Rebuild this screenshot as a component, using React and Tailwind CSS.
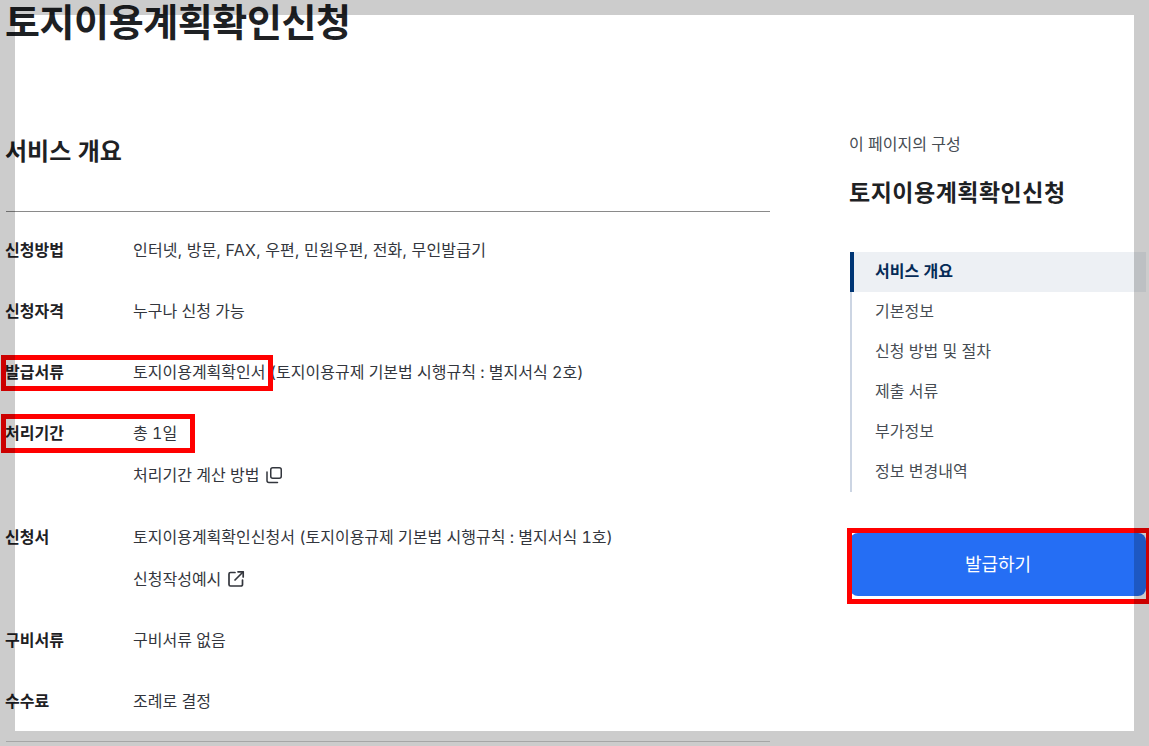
import React from "react";

const font = "font-['Inter','Noto_Sans_CJK_KR',sans-serif]";

const rows = [
  { label: "신청방법", lines: ["인터넷, 방문, FAX, 우편, 민원우편, 전화, 무인발급기"], wide: true },
  { label: "신청자격", lines: ["누구나 신청 가능"] },
  { label: "발급서류", lines: ["토지이용계획확인서 (토지이용규제 기본법 시행규칙 : 별지서식 2호)"] },
  { label: "처리기간", lines: ["총 1일", "처리기간 계산 방법"], icon: "copy" },
  { label: "신청서", lines: ["토지이용계획확인신청서 (토지이용규제 기본법 시행규칙 : 별지서식 1호)", "신청작성예시"], icon: "link" },
  { label: "구비서류", lines: ["구비서류 없음"] },
  { label: "수수료", lines: ["조례로 결정"] },
];

const nav = ["서비스 개요", "기본정보", "신청 방법 및 절차", "제출 서류", "부가정보", "정보 변경내역"];

const CopyIcon = () => (
  <svg width="18" height="18" viewBox="0 0 18 18" fill="none" stroke="#33363d" strokeWidth="1.5" strokeLinecap="round">
    <rect x="5.75" y="1.75" width="10.5" height="10.5" rx="2" />
    <path d="M2 6v8.5A2 2 0 0 0 4 16.5h8.5" />
  </svg>
);

const LinkIcon = () => (
  <svg width="18" height="18" viewBox="0 0 18 18" fill="none" stroke="#33363d" strokeWidth="1.7" strokeLinecap="round" strokeLinejoin="round">
    <path d="M8 2.5H3.5a1.5 1.5 0 0 0-1.5 1.5v10.5a1.5 1.5 0 0 0 1.5 1.5H14a1.5 1.5 0 0 0 1.5-1.5V10" />
    <path d="M11 1.8h5.2V7" />
    <path d="M16 2 8 10" />
  </svg>
);

const App = () => {
  return (
    <div className={`relative h-[746px] w-[1149px] overflow-hidden bg-white tabular-nums ${font}`}>
      <div className="flex">
        {/* main column */}
        <div className="ml-[6px] w-[764px]">
          <h1 className="-ml-px h-[44px] text-[38px] leading-[44px] font-bold tracking-[-0.4px] text-[#1e2124]">토지이용계획확인신청</h1>
          <h2 className="-ml-px mt-[91px] h-[34px] text-[24px] leading-[34px] font-bold text-[#1e2124]">서비스 개요</h2>
          <div className="mt-[42px] border-t border-[#8a8a8a]" />
          <div className="-ml-px mt-[26px] flex flex-col gap-[37px]">
            {rows.map((r) => (
              <div key={r.label} className={r.icon === "copy" ? "mb-px flex text-[16px] leading-[24px]" : "flex text-[16px] leading-[24px]"}>
                <div className="w-[128px] font-bold text-[#1e2124]">{r.label}</div>
                <div className="flex flex-col gap-[18px] text-[#33363d]">
                  {r.lines.map((line, i) => (
                    <div key={line} className="flex items-center gap-[6px]">
                      <span className={r.wide ? "tracking-[0.2px]" : ""}>{line}</span>
                      {i === 1 && r.icon === "copy" && <CopyIcon />}
                      {i === 1 && r.icon === "link" && <LinkIcon />}
                    </div>
                  ))}
                </div>
              </div>
            ))}
          </div>
          <div className="mt-[28px] border-t border-[#d0d0d0]" />
        </div>

        {/* right column */}
        <div className="ml-[80px] w-[296px] shrink-0">
          <p className="-ml-px mt-[134px] text-[16px] leading-[20px] text-[#464c53]">이 페이지의 구성</p>
          <p className="-ml-px mt-[25px] text-[23px] leading-[28px] font-bold tracking-[0.5px] text-[#1e2124]">토지이용계획확인신청</p>
          <ul className="mt-[45px] border-l-[2px] border-[#ccd5e3]">
            {nav.map((item, i) => (
              <li
                key={item}
                className={
                  i === 0
                    ? "-ml-[2px] flex h-[40px] items-center border-l-[4px] border-[#003675] bg-[#edf0f4] pb-[2px] pl-[22px] text-[16px] font-bold text-[#052b57]"
                    : "flex h-[40px] items-center pb-[2px] pl-[24px] text-[16px] text-[#464c53]"
                }
              >
                <span className="-ml-px">{item}</span>
              </li>
            ))}
          </ul>
          <button className="mt-[41px] h-[63px] w-[296px] rounded-[8px] bg-[#256ef4] text-[18px] text-white">발급하기</button>
        </div>
      </div>

      {/* annotation boxes */}
      <div className="absolute top-[355px] left-[1px] h-[36px] w-[272px] border-[5px] border-[#ff0000]" />
      <div className="absolute top-[414px] left-[1px] h-[39px] w-[194px] border-[5px] border-[#ff0000]" />
      <div className="absolute top-[528px] left-[847px] h-[76px] w-[304px] border-[5px] border-[#ff0000]" />

      {/* dim around the white panel */}
      <div className="absolute top-[15px] left-[15px] h-[716px] w-[1119px] shadow-[0_0_0_2000px_rgba(0,0,0,0.2)]" />
    </div>
  );
};

export default App;
